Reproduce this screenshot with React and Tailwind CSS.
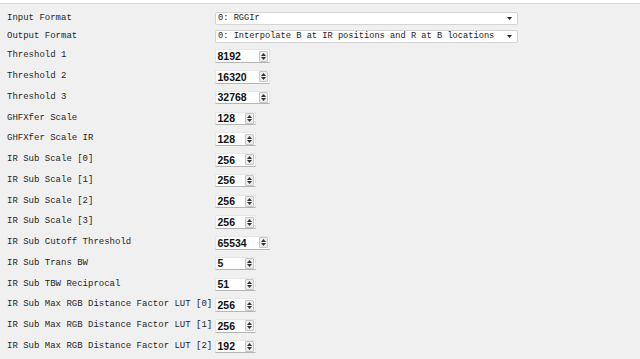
import React from 'react';

const selects = [
  { label: 'Input Format', value: '0: RGGIr' },
  { label: 'Output Format', value: '0: Interpolate B at IR positions and R at B locations' },
];

const fields = [
  { label: 'Threshold 1', value: '8192', wide: true },
  { label: 'Threshold 2', value: '16320', wide: true },
  { label: 'Threshold 3', value: '32768', wide: true },
  { label: 'GHFXfer Scale', value: '128' },
  { label: 'GHFXfer Scale IR', value: '128' },
  { label: 'IR Sub Scale [0]', value: '256' },
  { label: 'IR Sub Scale [1]', value: '256' },
  { label: 'IR Sub Scale [2]', value: '256' },
  { label: 'IR Sub Scale [3]', value: '256' },
  { label: 'IR Sub Cutoff Threshold', value: '65534', wide: true },
  { label: 'IR Sub Trans BW', value: '5' },
  { label: 'IR Sub TBW Reciprocal', value: '51' },
  { label: 'IR Sub Max RGB Distance Factor LUT [0]', value: '256' },
  { label: 'IR Sub Max RGB Distance Factor LUT [1]', value: '256' },
  { label: 'IR Sub Max RGB Distance Factor LUT [2]', value: '192' },
];

const labelFont = { fontFamily: '"Liberation Mono", monospace' };

function Spinner() {
  return (
    <div className="flex flex-col items-center justify-center w-[9px] h-[11px] mr-[1px] bg-[#ededed] border border-[#c6c6c6] rounded-[1px]">
      <svg width="5" height="3" viewBox="0 0 5 3" className="mb-[1px]">
        <path d="M0 3 L2.5 0 L5 3 Z" fill="#333" />
      </svg>
      <svg width="5" height="3" viewBox="0 0 5 3">
        <path d="M0 0 L5 0 L2.5 3 Z" fill="#333" />
      </svg>
    </div>
  );
}

export default function App() {
  return (
    <div className="w-[640px] h-[359px] bg-[#f0f0f0] overflow-hidden flex flex-col">
      <div className="h-[4px] bg-white border-b border-[#d9d9d9] shrink-0" />
      <div className="pt-[5.7px] flex flex-col">
        {selects.map((s) => (
          <div key={s.label} className="h-[18px] flex items-center">
            <div className="w-[215px] pl-[7px] text-[9px] text-[#262626]" style={labelFont}>
              {s.label}
            </div>
            <div className="w-[303px] h-[12.5px] bg-white border border-[#d4d4d4] rounded-[2px] flex items-center justify-between pl-[2px] pr-[5px]">
              <span className="text-[8.7px] text-[#222] leading-none" style={labelFont}>
                {s.value}
              </span>
              <svg width="5" height="3" viewBox="0 0 5 3">
                <path d="M0 0 L5 0 L2.5 3 Z" fill="#222" />
              </svg>
            </div>
          </div>
        ))}
        {fields.map((f) => (
          <div key={f.label} className="h-[20.75px] flex items-center">
            <div className="w-[215px] pl-[7px] text-[9px] text-[#262626] whitespace-nowrap" style={labelFont}>
              {f.label}
            </div>
            <div
              className={`${f.wide ? 'w-[55px]' : 'w-[41px]'} h-[13.5px] bg-white border border-[#e6e6e6] border-b-[#b5b5b5] flex items-center justify-between pl-[1.5px]`}
            >
              <span
                className="text-[10.5px] font-bold text-[#111] leading-none"
                style={{ fontFamily: '"Liberation Sans", Arial, sans-serif' }}
              >
                {f.value}
              </span>
              <Spinner />
            </div>
          </div>
        ))}
      </div>
    </div>
  );
}
